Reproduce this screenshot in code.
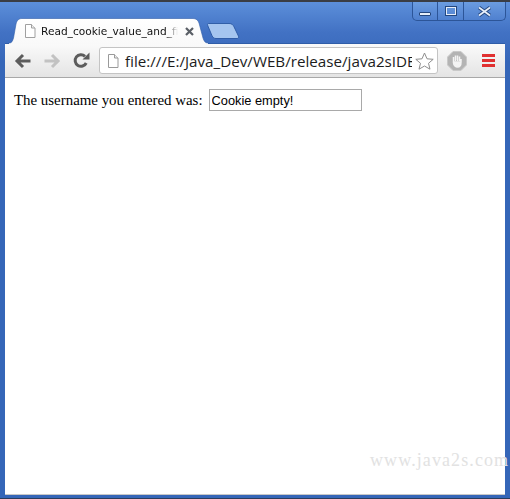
<div class="window">
  <header class="titlebar">
    <div class="tab">
      <svg class="tab-shape" width="199" height="26" viewBox="0 0 199 26" aria-hidden="true">
        <defs>
          <linearGradient id="tabfill" x1="0" y1="0" x2="0" y2="1">
            <stop offset="0" stop-color="#ffffff" />
            <stop offset="1" stop-color="#f9f9f9" />
          </linearGradient>
        </defs>
        <path d="M0 25 C3 25 3.500 23 4.500 20 L7 6 C8 2 10 .5 13 .5 L184 .5 C187 .5 189 2 190 5 L194 20 C195 23 196 25 199 25 L199 26 L0 26 Z" fill="url(#tabfill)" />
        <path d="M0 25 C3 25 3.500 23 4.500 20 L7 6 C8 2 10 .5 13 .5 L184 .5 C187 .5 189 2 190 5 L194 20 C195 23 196 25 199 25" fill="none" stroke="#2f5da8" stroke-width=".6" />
      </svg>
      <svg class="page-icon" width="12" height="14" viewBox="0 0 12 14" aria-hidden="true">
        <path d="M1.500 .5 H7.500 L11 4 V13.500 H1.500 Z" fill="#fff" stroke="#a0a0a0" />
        <path d="M7.500 .5 V4 H11" fill="#eee" stroke="#a0a0a0" />
      </svg>
      <span class="tab-title">Read_cookie_value_and_fi</span>
      <svg class="tab-close" width="9" height="9" viewBox="0 0 9 9" aria-hidden="true">
        <path d="M1 1 L8 8 M8 1 L1 8" stroke="#5a5f66" stroke-width="2.200" />
      </svg>
    </div>
    <svg class="new-tab" width="33" height="16" viewBox="0 0 33 17" preserveAspectRatio="none" aria-hidden="true">
      <path d="M.5 1.500 C.5 .8 1 .5 2 .5 H22 C25 .5 26 2 27 4 L31.500 14 C32 15.500 31.500 16.500 30 16.500 H9 C7 16.500 6 15.500 5 13.500 L.8 3 Z" fill="#a5c5ef" stroke="#2d5ba5" />
    </svg>
    <div class="controls">
      <div class="ctl ctl-min"><span class="min-glyph"></span></div>
      <div class="ctl ctl-max"><span class="max-glyph"></span></div>
      <div class="ctl ctl-close">
        <svg width="15" height="11" viewBox="0 0 15 11" aria-hidden="true">
          <path d="M2 1.500 L13 9.500 M13 1.500 L2 9.500" stroke="#24477f" stroke-width="3.600" />
          <path d="M2 1.500 L13 9.500 M13 1.500 L2 9.500" stroke="#e6eef9" stroke-width="1.800" />
        </svg>
      </div>
    </div>
  </header>

  <nav class="toolbar">
    <svg class="btn back" width="18" height="16" viewBox="0 0 18 16" aria-hidden="true">
      <path d="M16.500 8 H4 M9 2 L3 8 L9 14" fill="none" stroke="#5c5c5c" stroke-width="3" />
    </svg>
    <svg class="btn forward" width="18" height="16" viewBox="0 0 18 16" aria-hidden="true">
      <path d="M1.500 8 H14 M9 2 L15 8 L9 14" fill="none" stroke="#c2c2c2" stroke-width="3" />
    </svg>
    <svg class="btn reload" width="17" height="17" viewBox="0 0 17 17" aria-hidden="true">
      <path d="M13.200 11 A5.800 5.800 0 1 1 12 4.300" fill="none" stroke="#5c5c5c" stroke-width="3" />
      <path d="M9.500 7.500 H16.500 V.5 Z" fill="#5c5c5c" />
    </svg>
    <div class="omnibox">
      <svg class="page-icon" width="12" height="14" viewBox="0 0 12 14" aria-hidden="true">
        <path d="M1.500 .5 H7.500 L11 4 V13.500 H1.500 Z" fill="#fff" stroke="#9a9a9a" />
        <path d="M7.500 .5 V4 H11" fill="#eee" stroke="#9a9a9a" />
      </svg>
      <span class="url">file:///E:/Java_Dev/WEB/release/java2sIDE</span>
      <svg class="star" width="19" height="18" viewBox="0 0 19 18" aria-hidden="true">
        <path d="M9.500 1 L12 6.800 L18.200 7.300 L13.500 11.300 L15 17.200 L9.500 14 L4 17.200 L5.500 11.300 L.8 7.300 L7 6.800 Z" fill="#fff" stroke="#8e8e8e" />
      </svg>
    </div>
    <svg class="adblock" width="20" height="20" viewBox="0 0 20 20" aria-hidden="true">
      <path d="M6 .5 H14 L19.500 6 V14 L14 19.500 H6 L.5 14 V6 Z" fill="#b4b4b4" stroke="#c9c9c9" />
      <path d="M6.500 10 V6 M8.500 10 V4.500 M10.500 10 V4.500 M12.500 10 V5.500 M14 11 V8 M6.500 9 L6.500 12 C7 15 9 16 10.500 16 C13 16 14 14 14 11 L6.500 11 Z" fill="#f4f4f4" stroke="#f4f4f4" stroke-width="1.500" />
    </svg>
    <div class="menu"><span></span><span></span><span></span></div>
  </nav>

  <main class="page">
    <div class="line">
      <span>The username you entered was:</span>
      <input class="field" type="text" value="Cookie empty!" />
    </div>
  </main>

  <div class="watermark">www.java2s.com</div>
</div>

<style>
  :global(body) {
    margin: 0;
    background: #2a2f38;
  }
  .window {
    position: relative;
    box-sizing: border-box;
    width: 510px;
    height: 499px;
    overflow: hidden;
    padding: 0 5px 3px 5px;
    border-top: 2px solid #3a3d44;
    border-bottom: 1px solid #2b3c5c;
    background: linear-gradient(#5c8fda 0, #4272c4 30px, #3566b8 60px, #3566b8 100%);
    display: flex;
    flex-direction: column;
  }
  .titlebar {
    display: flex;
    align-items: flex-end;
    height: 41px;
    flex: none;
    position: relative;
    z-index: 1;
  }
  .tab {
    position: relative;
    margin-left: 4px;
    margin-bottom: -1px;
    width: 198px;
    height: 26px;
    display: flex;
    align-items: center;
    padding-left: 15px;
    box-sizing: border-box;
    flex: none;
  }
  .tab-shape {
    position: absolute;
    left: 0;
    top: 0;
  }
  .tab .page-icon {
    position: relative;
    flex: none;
  }
  .tab-title {
    position: relative;
    margin-left: 5px;
    width: 137px;
    font: 10.600px/14px Tahoma, "DejaVu Sans", sans-serif;
    color: #111;
    white-space: nowrap;
    overflow: hidden;
    flex: none;
    mask-image: linear-gradient(to right, #000 125px, transparent 137px);
  }
  .tab-close {
    position: relative;
    margin-left: 7px;
    flex: none;
  }
  .new-tab {
    margin-bottom: 4px;
    flex: none;
  }
  .controls {
    position: absolute;
    top: 0;
    right: -1px;
    display: flex;
    height: 18px;
    border: 1px solid #2c5598;
    border-top: none;
    border-radius: 0 0 5px 5px;
    background: linear-gradient(#6b9ce0, #4f80cf);
  }
  .ctl {
    display: flex;
    align-items: center;
    justify-content: center;
    box-sizing: border-box;
  }
  .ctl-min {
    width: 25px;
    border-right: 1px solid #2c5598;
  }
  .ctl-max {
    width: 26px;
    border-right: 1px solid #2c5598;
  }
  .ctl-close {
    width: 41px;
  }
  .min-glyph {
    display: block;
    width: 10px;
    height: 2px;
    margin-top: 6px;
    background: #e6eef9;
    border: 1px solid #24477f;
    border-radius: 1px;
  }
  .max-glyph {
    display: block;
    box-sizing: border-box;
    width: 12px;
    height: 10px;
    background: transparent;
    border: 2px solid #e6eef9;
    outline: 1px solid #24477f;
    outline-offset: -1px;
  }
  .toolbar {
    flex: none;
    height: 35px;
    display: flex;
    align-items: center;
    box-sizing: border-box;
    background: linear-gradient(#fafafa, #e4e4e4);
    border-bottom: 1px solid #a8a8a8;
    border-top: 1px solid #2f5da8;
    padding-left: 9px;
  }
  .btn {
    flex: none;
  }
  .forward {
    margin-left: 11px;
  }
  .reload {
    margin-left: 12px;
  }
  .omnibox {
    margin-left: 9px;
    width: 339px;
    height: 27px;
    box-sizing: border-box;
    flex: none;
    display: flex;
    align-items: center;
    background: #fff;
    border: 1px solid #c4c4c4;
    border-radius: 3px;
    padding-left: 7px;
    overflow: hidden;
  }
  .omnibox .page-icon {
    flex: none;
  }
  .url {
    margin-left: 6px;
    width: 287px;
    flex: none;
    overflow: hidden;
    white-space: nowrap;
    font: 15.200px/22px "Open Sans", sans-serif;
    color: #1c1c1c;
  }
  .star {
    flex: none;
    margin-left: 3px;
  }
  .adblock {
    flex: none;
    margin-left: 9px;
  }
  .menu {
    flex: none;
    margin-left: 15px;
    width: 13px;
    display: flex;
    flex-direction: column;
    gap: 2px;
  }
  .menu span {
    display: block;
    height: 3px;
    background: #e03030;
  }
  .page {
    flex: 1;
    background: #fff;
    border-bottom: 1px solid #c8c8c8;
    padding: 11px 0 0 9px;
  }
  .line {
    display: flex;
    align-items: center;
    gap: 6px;
    font: 14.900px/22px "Liberation Serif", serif;
    color: #000;
  }
  .field {
    box-sizing: border-box;
    width: 153px;
    height: 22px;
    margin: 0;
    padding: 1px 2px;
    border: 1px solid #a9a9a9;
    background: #fff;
    outline: none;
    font: 12.800px "Liberation Sans", sans-serif;
    color: #000;
  }
  .watermark {
    position: absolute;
    left: 370px;
    top: 447px;
    font: 18px/22px "Liberation Serif", serif;
    letter-spacing: 1.100px;
    color: #e2e2e2;
    white-space: nowrap;
  }
</style>
